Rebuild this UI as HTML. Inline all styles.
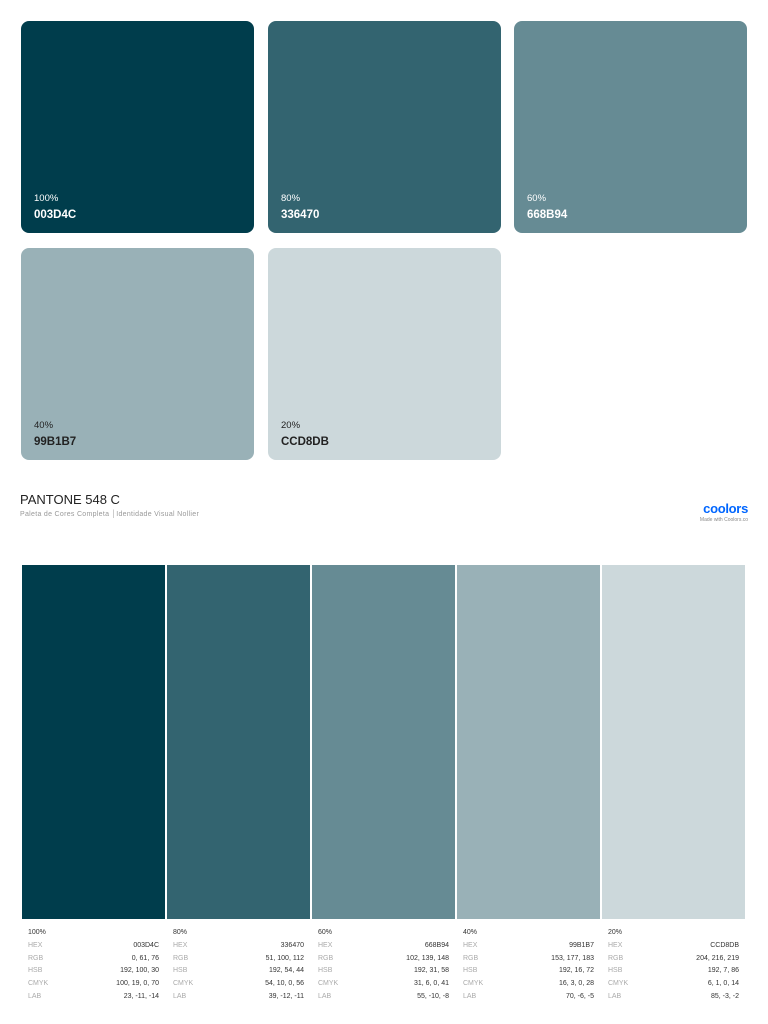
<!DOCTYPE html>
<html><head><meta charset="utf-8"><style>
*{margin:0;padding:0;box-sizing:border-box}
body{width:768px;height:1024px;background:#fff;font-family:"Liberation Sans",sans-serif;position:relative;overflow:hidden}
.card{position:absolute;width:233px;height:212px;border-radius:8px}
.card .p{position:absolute;left:13px;top:172px;font-size:9.5px}
.card .h{position:absolute;left:13px;top:188px;font-size:11.5px;font-weight:bold}
.w{color:#fff}.d{color:#222}
.s{position:absolute;top:565px;width:143px;height:354px}
.info{position:absolute;top:927px;width:131px;font-size:7px;line-height:12.8px}
.info .r{display:flex;justify-content:space-between}
.info .r span:first-child{color:#aaa}
.info .r span:last-child{color:#333}
</style></head><body>
<div class="card w" style="left:21px;top:21px;background:#003D4C"><div class="p">100%</div><div class="h">003D4C</div></div>
<div class="card w" style="left:268px;top:21px;background:#336470"><div class="p">80%</div><div class="h">336470</div></div>
<div class="card w" style="left:514px;top:21px;background:#668B94"><div class="p">60%</div><div class="h">668B94</div></div>
<div class="card d" style="left:21px;top:248px;background:#99B1B7"><div class="p">40%</div><div class="h">99B1B7</div></div>
<div class="card d" style="left:268px;top:248px;background:#CCD8DB"><div class="p">20%</div><div class="h">CCD8DB</div></div>
<div style="position:absolute;left:20px;top:492px;font-size:13px;color:#222">PANTONE 548 C</div>
<div style="position:absolute;left:20px;top:511px;font-size:7px;color:#999;letter-spacing:.3px">Paleta de Cores Completa │Identidade Visual Nollier</div>
<div style="position:absolute;right:20px;top:501px;font-size:13px;font-weight:bold;color:#0066ff;letter-spacing:-.3px">coolors</div>
<div style="position:absolute;right:20px;top:517px;font-size:5px;color:#888">Made with Coolors.co</div>
<div class="s" style="left:22px;background:#003D4C"></div>
<div class="s" style="left:167px;background:#336470"></div>
<div class="s" style="left:312px;background:#668B94"></div>
<div class="s" style="left:457px;background:#99B1B7"></div>
<div class="s" style="left:602px;background:#CCD8DB"></div>
<div class="info" style="left:28px"><div style="color:#333">100%</div><div class="r"><span>HEX</span><span>003D4C</span></div><div class="r"><span>RGB</span><span>0, 61, 76</span></div><div class="r"><span>HSB</span><span>192, 100, 30</span></div><div class="r"><span>CMYK</span><span>100, 19, 0, 70</span></div><div class="r"><span>LAB</span><span>23, -11, -14</span></div></div>
<div class="info" style="left:173px"><div style="color:#333">80%</div><div class="r"><span>HEX</span><span>336470</span></div><div class="r"><span>RGB</span><span>51, 100, 112</span></div><div class="r"><span>HSB</span><span>192, 54, 44</span></div><div class="r"><span>CMYK</span><span>54, 10, 0, 56</span></div><div class="r"><span>LAB</span><span>39, -12, -11</span></div></div>
<div class="info" style="left:318px"><div style="color:#333">60%</div><div class="r"><span>HEX</span><span>668B94</span></div><div class="r"><span>RGB</span><span>102, 139, 148</span></div><div class="r"><span>HSB</span><span>192, 31, 58</span></div><div class="r"><span>CMYK</span><span>31, 6, 0, 41</span></div><div class="r"><span>LAB</span><span>55, -10, -8</span></div></div>
<div class="info" style="left:463px"><div style="color:#333">40%</div><div class="r"><span>HEX</span><span>99B1B7</span></div><div class="r"><span>RGB</span><span>153, 177, 183</span></div><div class="r"><span>HSB</span><span>192, 16, 72</span></div><div class="r"><span>CMYK</span><span>16, 3, 0, 28</span></div><div class="r"><span>LAB</span><span>70, -6, -5</span></div></div>
<div class="info" style="left:608px"><div style="color:#333">20%</div><div class="r"><span>HEX</span><span>CCD8DB</span></div><div class="r"><span>RGB</span><span>204, 216, 219</span></div><div class="r"><span>HSB</span><span>192, 7, 86</span></div><div class="r"><span>CMYK</span><span>6, 1, 0, 14</span></div><div class="r"><span>LAB</span><span>85, -3, -2</span></div></div>
</body></html>
